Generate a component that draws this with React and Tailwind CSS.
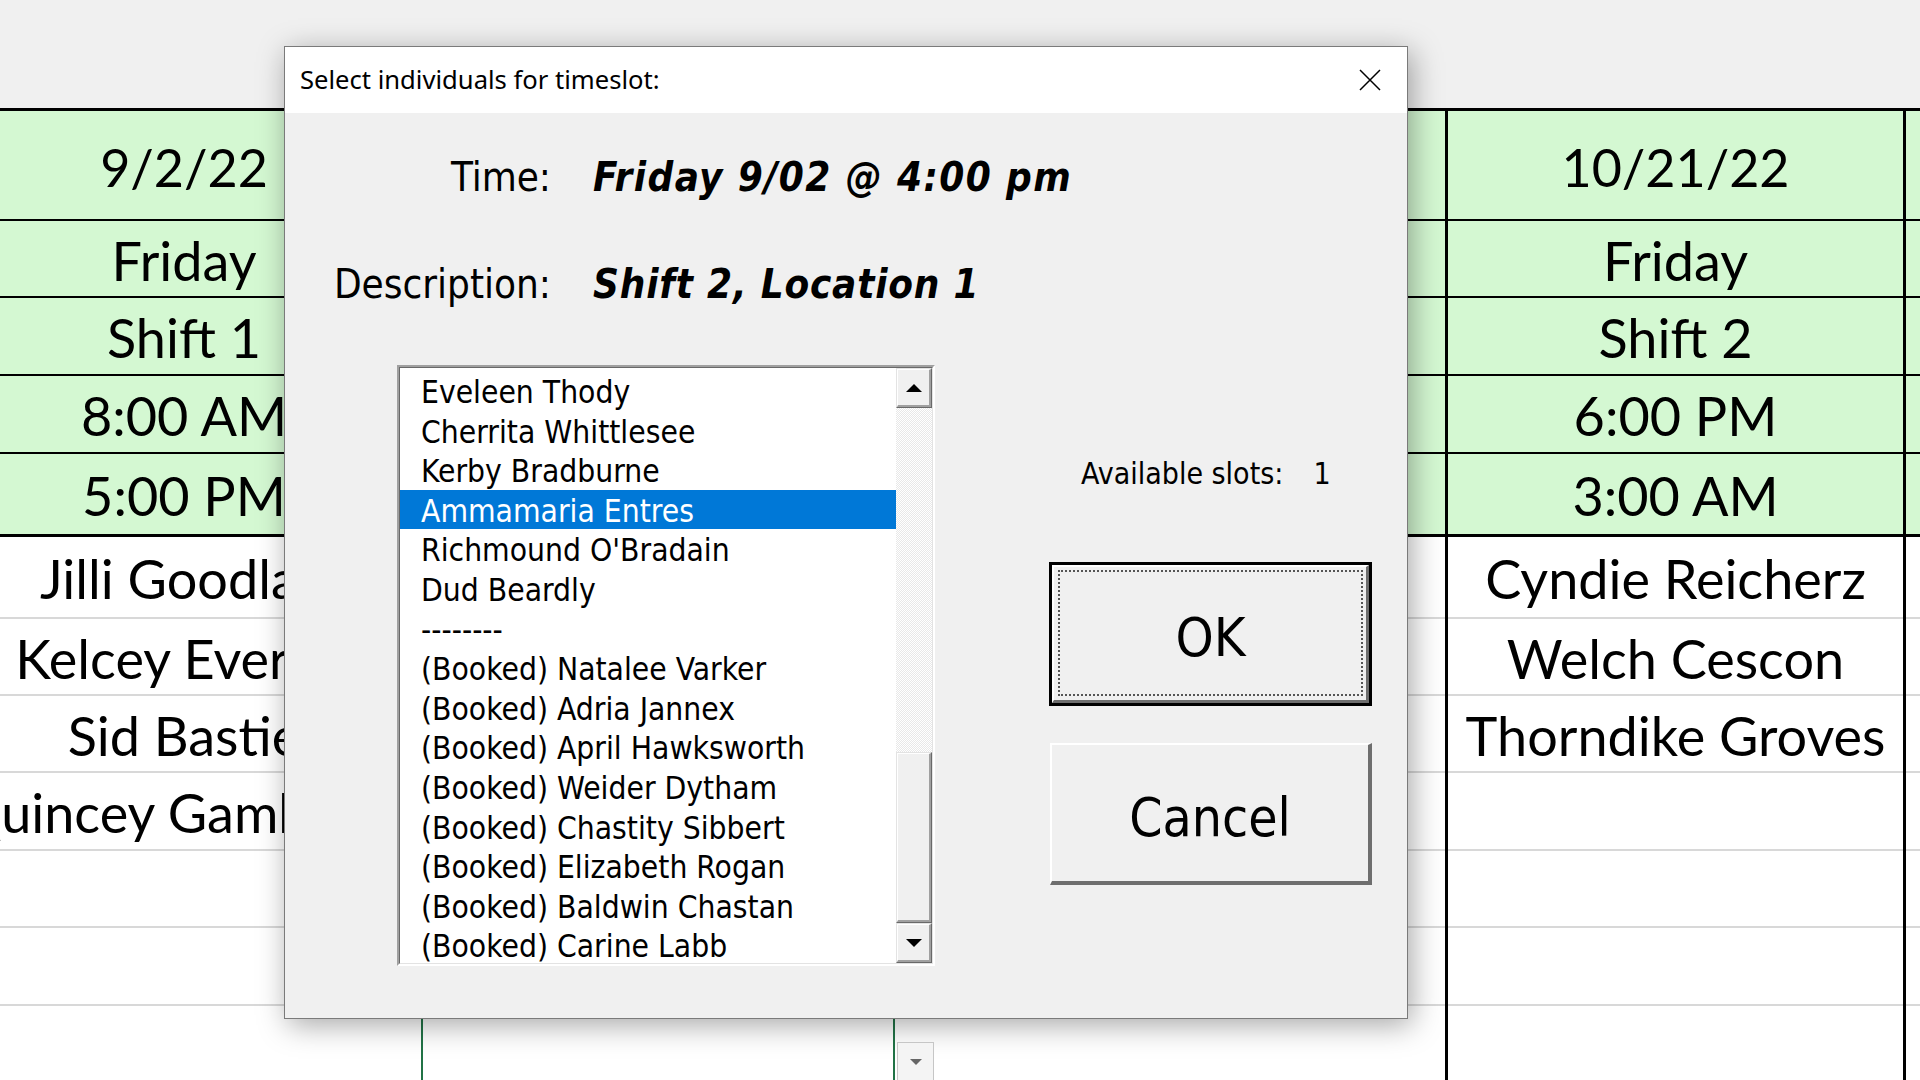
import React from "react";

const TAH = "font-['DejaVu_Sans_Condensed','DejaVu_Sans',sans-serif] font-stretch-condensed";
const GREEN = "bg-[#d4f8d2]";

const ROWS = [
  { h: "h-[110px]", green: true, fs: "text-[52px]", line: "border-b-2 border-b-black", a: "9/2/22", d: "10/21/22" },
  { h: "h-[77px]", green: true, line: "border-b-2 border-b-black", a: "Friday", d: "Friday" },
  { h: "h-[78px]", green: true, line: "border-b-2 border-b-black", a: "Shift 1", d: "Shift 2" },
  { h: "h-[78px]", green: true, line: "border-b-2 border-b-black", a: "8:00 AM", d: "6:00 PM" },
  { h: "h-[83px]", green: true, line: "border-b-[3px] border-b-black", a: "5:00 PM", d: "3:00 AM" },
  { h: "h-[82px]", line: "border-b-2 border-b-[#d8d8d8]", a: "Jilli Goodlad", d: "Cyndie Reicherz" },
  { h: "h-[77px]", line: "border-b-2 border-b-[#d8d8d8]", a: "Kelcey Everett", d: "Welch Cescon" },
  { h: "h-[77px]", line: "border-b-2 border-b-[#d8d8d8]", a: "Sid Bastie", d: "Thorndike Groves" },
  { h: "h-[78px]", line: "border-b-2 border-b-[#d8d8d8]", a: "Quincey Gambrelle", d: "" },
  { h: "h-[77px]", line: "border-b-2 border-b-[#d8d8d8]", a: "", d: "" },
  { h: "h-[78px]", line: "border-b-2 border-b-[#d8d8d8]", a: "", d: "" },
  { h: "h-[78px]", line: "border-b-2 border-b-[#d8d8d8]", a: "", d: "", sel: true },
];

const NAMES = [
  "Eveleen Thody",
  "Cherrita Whittlesee",
  "Kerby Bradburne",
  "Ammamaria Entres",
  "Richmound O'Bradain",
  "Dud Beardly",
  "--------",
  "(Booked) Natalee Varker",
  "(Booked) Adria Jannex",
  "(Booked) April Hawksworth",
  "(Booked) Weider Dytham",
  "(Booked) Chastity Sibbert",
  "(Booked) Elizabeth Rogan",
  "(Booked) Baldwin Chastan",
  "(Booked) Carine Labb",
];

function Sheet() {
  return (
    <div className="flex flex-col font-['Lato',sans-serif] text-[54px] text-black">
      <div className="h-[108px] bg-[#f0f0f0]" />
      <div className="h-[3px] bg-black" />
      {ROWS.map((r, i) => {
        const bg = r.green ? GREEN : "bg-white";
        return (
          <div key={i} className={"flex shrink-0 " + r.h + " " + bg + " " + (r.fs || "")}>
            <div className={"w-[422px] shrink-0 flex items-center justify-center pr-[54px] pt-[3px] " + r.line}>
              <span className="whitespace-nowrap">{r.a}</span>
            </div>
            <div className={"w-[472px] shrink-0 relative " + r.line}>
              {r.sel && (
                <div className="absolute -left-[1px] -right-[1px] -top-[1px] bottom-0 border-2 border-[#217346]" />
              )}
            </div>
            <div className={"w-[551px] shrink-0 " + r.line} />
            <div className="w-[461px] shrink-0 border-x-[3px] border-x-black">
              <div className={"h-full flex items-center justify-center pt-[3px] " + r.line}>
                <span className="whitespace-nowrap">{r.d}</span>
              </div>
            </div>
            <div className={"flex-1 " + r.line} />
          </div>
        );
      })}
    </div>
  );
}

function Raised({ className, children }) {
  return (
    <div
      className={
        "border-t border-l border-t-[#e3e3e3] border-l-[#e3e3e3] border-b border-r border-b-[#696969] border-r-[#696969] " +
        className
      }
    >
      <div className="w-full h-full border-t border-l border-t-white border-l-white border-b-2 border-r-2 border-b-[#a0a0a0] border-r-[#a0a0a0] bg-[#f0f0f0] flex items-center justify-center">
        {children}
      </div>
    </div>
  );
}

function ListBox() {
  return (
    <div className="w-[538px] h-[601px] shrink-0 border-t-2 border-l-2 border-t-[#a0a0a0] border-l-[#a0a0a0] border-b-2 border-r-2 border-b-white border-r-white">
      <div className="w-full h-full flex border-t border-l border-t-[#696969] border-l-[#696969] border-b border-r border-b-[#e3e3e3] border-r-[#e3e3e3] bg-white">
        <div className="w-[496px] h-full overflow-hidden pt-[3px]">
          {NAMES.map((n, i) => (
            <div
              key={i}
              className={
                "h-[39.6px] pl-[21px] pt-[4px] leading-[35.6px] text-[31.5px] whitespace-nowrap " +
                (i === 3 ? "bg-[#0078d7] text-white" : "text-black")
              }
            >
              {n}
            </div>
          ))}
        </div>
        <div className="w-[36px] h-full flex flex-col">
          <Raised className="h-[40px] shrink-0">
            <svg width="16" height="8" viewBox="0 0 16 8">
              <path d="M0 8 L8 0 L16 8 Z" fill="#000" />
            </svg>
          </Raised>
          <div className="h-[344px] shrink-0 bg-[repeating-conic-gradient(#e8e8e8_0%_25%,#ffffff_0%_50%)] bg-[length:2px_2px]" />
          <Raised className="h-[171px] shrink-0" />
          <Raised className="h-[40px] shrink-0">
            <svg width="16" height="8" viewBox="0 0 16 8">
              <path d="M0 0 L16 0 L8 8 Z" fill="#000" />
            </svg>
          </Raised>
        </div>
      </div>
    </div>
  );
}

function Dialog() {
  return (
    <div
      className={
        "absolute left-[284px] top-[46px] w-[1124px] h-[973px] flex flex-col border border-[#7a7a7a] bg-[#f0f0f0] shadow-[4px_6px_28px_rgba(0,0,0,0.35)] text-black " +
        TAH
      }
    >
      <div className="h-[66px] shrink-0 bg-white flex items-center justify-between pl-[15px] pr-[26px]">
        <span className="font-['Noto_Sans',sans-serif] text-[25.6px] font-stretch-normal">
          Select individuals for timeslot:
        </span>
        <svg width="22" height="22" viewBox="0 0 22 22">
          <path d="M1 1 L21 21 M21 1 L1 21" stroke="#000" strokeWidth="1.5" fill="none" />
        </svg>
      </div>
      <div className="flex flex-col pt-[44px]">
        <div className="flex h-[40px] leading-[40px] text-[40px] whitespace-nowrap">
          <div className="w-[266px] text-right">Time:</div>
          <div className="ml-[42px] font-bold italic tracking-[1.4px]">Friday 9/02 @ 4:00 pm</div>
        </div>
        <div className="mt-[67px] flex h-[40px] leading-[40px] text-[40px] whitespace-nowrap">
          <div className="w-[266px] text-right">Description:</div>
          <div className="ml-[42px] font-bold italic tracking-[0.8px]">Shift 2, Location 1</div>
        </div>
        <div className="mt-[61px] ml-[112px] flex items-start">
          <ListBox />
          <div className="ml-[114px] flex flex-col">
            <div className="mt-[94px] pl-[32px] h-[30px] leading-[30px] text-[30px] whitespace-nowrap">
              Available slots:<span className="ml-[30px]">1</span>
            </div>
            <div className="mt-[73px] w-[323px] h-[144px] border-[3px] border-black">
              <div className="w-full h-full border-t-2 border-l-2 border-t-white border-l-white border-b-[3px] border-r-[3px] border-b-[#6e6e6e] border-r-[#6e6e6e] pt-[3px] pl-[4px] pr-[3px] pb-[4px]">
                <div className="w-full h-full border-2 border-dotted border-[#555] flex items-center justify-center pt-[9px] text-[54px]">
                  OK
                </div>
              </div>
            </div>
            <div className="mt-[37px] ml-[1px] w-[322px] h-[142px] border-t-2 border-l-2 border-t-white border-l-white border-b-4 border-r-4 border-b-[#6e6e6e] border-r-[#6e6e6e] flex items-center justify-center pt-[9px] text-[53px]">
              Cancel
            </div>
          </div>
        </div>
      </div>
    </div>
  );
}

export default function App() {
  return (
    <div className="relative w-[1920px] h-[1080px] overflow-hidden bg-white">
      <Sheet />
      <Dialog />
      <div className="absolute left-[897px] top-[1042px] w-[37px] h-[42px] bg-[#f4f4f4] border border-[#c6c6c6] flex items-start justify-center pt-[16px]">
        <svg width="12" height="6" viewBox="0 0 12 6">
          <path d="M0 0 L12 0 L6 6 Z" fill="#666" />
        </svg>
      </div>
    </div>
  );
}
